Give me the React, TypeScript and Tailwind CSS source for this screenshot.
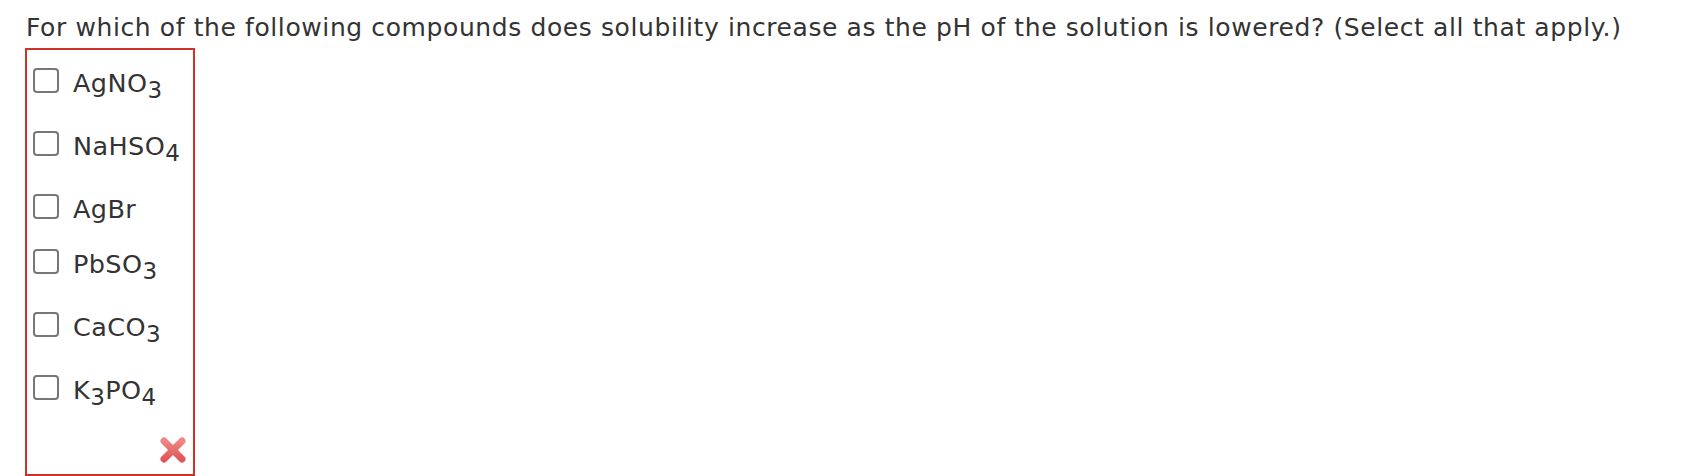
import React from 'react';

type Part = { t: string; sub?: boolean };

const options: Part[][] = [
  [{ t: 'AgNO' }, { t: '3', sub: true }],
  [{ t: 'NaHSO' }, { t: '4', sub: true }],
  [{ t: 'AgBr' }],
  [{ t: 'PbSO' }, { t: '3', sub: true }],
  [{ t: 'CaCO' }, { t: '3', sub: true }],
  [{ t: 'K' }, { t: '3', sub: true }, { t: 'PO' }, { t: '4', sub: true }],
];

function WrongMark() {
  return (
    <svg width="28" height="28" viewBox="0 0 28 28">
      <defs>
        <linearGradient id="xg" x1="0" y1="0" x2="0" y2="1">
          <stop offset="0" stopColor="#ef8585" />
          <stop offset="1" stopColor="#e05757" />
        </linearGradient>
      </defs>
      <path d="M5 5 L23 23 M23 5 L5 23" stroke="url(#xg)" strokeWidth="7" strokeLinecap="round" />
    </svg>
  );
}

export default function App() {
  return (
    <div className="w-[1686px] h-[476px] bg-white text-[#333333] font-['DejaVu_Sans',Verdana,sans-serif] overflow-hidden">
      <div className="pl-[26px] pt-[13px] text-[25px] leading-[30px] tracking-[0.6px] whitespace-nowrap">
        For which of the following compounds does solubility increase as the pH of the solution is lowered? (Select all that apply.)
      </div>
      <div className="ml-[25px] mt-[5px] w-[170px] h-[428px] border-2 border-[#d0322a] flex flex-col pt-[18px] pl-[6px]">
        {options.map((parts, i) => {
          const hasSub = parts.some(p => p.sub);
          return (
            <label key={i} className={`flex items-start gap-[14px] ${hasSub ? 'h-[63px]' : 'h-[55px]'}`}>
              <span className="w-[26px] h-[25px] rounded-[4px] border-2 border-[#777777] bg-white shrink-0" />
              <span className="text-[25.5px] leading-[30px] tracking-[0.4px]">
                {parts.map((p, j) =>
                  p.sub ? (
                    <span key={j} className="relative top-[6px] text-[23px]">{p.t}</span>
                  ) : (
                    <span key={j}>{p.t}</span>
                  )
                )}
              </span>
            </label>
          );
        })}
        <div className="flex justify-end pr-[6px] mt-[-2px]">
          <WrongMark />
        </div>
      </div>
    </div>
  );
}
